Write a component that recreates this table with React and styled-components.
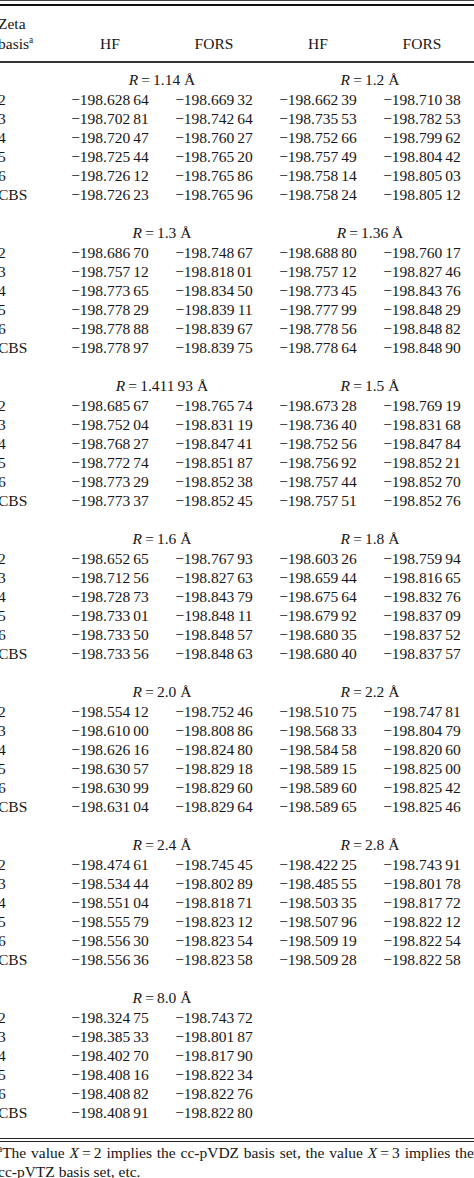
import React from 'react';
import styled, { createGlobalStyle } from 'styled-components';

const Global = createGlobalStyle`
  html, body { margin: 0; padding: 0; background: #fff; }
  body {
    overflow: hidden;
    font-family: "Liberation Serif", "Times New Roman", serif;
    color: #161616;
  }
`;

const COLS = '60px repeat(4, 104px)';
const ROW = 19.125;

const Page = styled.div`
  width: 476px;
  margin-left: -2px;
  font-size: 15.5px;
`;

const TopRule = styled.div`
  height: 3px;
  border-top: 1px solid #444;
  border-bottom: 2px solid #111;
`;

const HeaderGrid = styled.div`
  display: grid;
  grid-template-columns: ${COLS};
  align-items: end;
  padding: 8px 0 7px;
  line-height: 20px;
`;

const HeadLabel = styled.div`
  text-align: left;
`;

const HeadCell = styled.div`
  text-align: center;
`;

const Sup = styled.sup`
  font-size: 0.6em;
  line-height: 0;
  vertical-align: 0.6em;
`;

const HeaderRule = styled.div`
  border-top: 2px solid #333;
`;

const Body = styled.div`
  display: flex;
  flex-direction: column;
  gap: ${ROW}px;
  padding-top: 7.4px;
`;

const Block = styled.div`
  display: flex;
  flex-direction: column;
`;

const Row = styled.div`
  display: grid;
  grid-template-columns: ${COLS};
  height: ${ROW}px;
  line-height: ${ROW}px;
`;

const RangeCell = styled.div`
  grid-column: span 2;
  text-align: center;
  white-space: nowrap;
`;

const Italic = styled.i`
  font-style: italic;
`;

const LabelCell = styled.div`
  text-align: left;
`;

const ValueCell = styled.div`
  text-align: center;
  white-space: nowrap;
`;

const BottomRule = styled.div`
  margin-top: 15.7px;
  height: 2px;
  border-top: 1px solid #222;
  border-bottom: 1px solid #222;
`;

const Footnote = styled.p`
  margin: 0;
  padding-top: 1px;
  line-height: 19px;
  text-align: justify;
  text-align-last: left;
`;

const fmt = (v) => {
  const [a, b] = v.split('.');
  return `\u2212${a}.${b.slice(0, 3)}\u2009${b.slice(3)}`;
};

const LABELS = ['2', '3', '4', '5', '6', 'CBS'];

const BLOCKS = [
  {
    r: ['1.14', '1.2'],
    rows: [
      ['198.62864', '198.66932', '198.66239', '198.71038'],
      ['198.70281', '198.74264', '198.73553', '198.78253'],
      ['198.72047', '198.76027', '198.75266', '198.79962'],
      ['198.72544', '198.76520', '198.75749', '198.80442'],
      ['198.72612', '198.76586', '198.75814', '198.80503'],
      ['198.72623', '198.76596', '198.75824', '198.80512'],
    ],
  },
  {
    r: ['1.3', '1.36'],
    rows: [
      ['198.68670', '198.74867', '198.68880', '198.76017'],
      ['198.75712', '198.81801', '198.75712', '198.82746'],
      ['198.77365', '198.83450', '198.77345', '198.84376'],
      ['198.77829', '198.83911', '198.77799', '198.84829'],
      ['198.77888', '198.83967', '198.77856', '198.84882'],
      ['198.77897', '198.83975', '198.77864', '198.84890'],
    ],
  },
  {
    r: ['1.411\u200993', '1.5'],
    rows: [
      ['198.68567', '198.76574', '198.67328', '198.76919'],
      ['198.75204', '198.83119', '198.73640', '198.83168'],
      ['198.76827', '198.84741', '198.75256', '198.84784'],
      ['198.77274', '198.85187', '198.75692', '198.85221'],
      ['198.77329', '198.85238', '198.75744', '198.85270'],
      ['198.77337', '198.85245', '198.75751', '198.85276'],
    ],
  },
  {
    r: ['1.6', '1.8'],
    rows: [
      ['198.65265', '198.76793', '198.60326', '198.75994'],
      ['198.71256', '198.82763', '198.65944', '198.81665'],
      ['198.72873', '198.84379', '198.67564', '198.83276'],
      ['198.73301', '198.84811', '198.67992', '198.83709'],
      ['198.73350', '198.84857', '198.68035', '198.83752'],
      ['198.73356', '198.84863', '198.68040', '198.83757'],
    ],
  },
  {
    r: ['2.0', '2.2'],
    rows: [
      ['198.55412', '198.75246', '198.51075', '198.74781'],
      ['198.61000', '198.80886', '198.56833', '198.80479'],
      ['198.62616', '198.82480', '198.58458', '198.82060'],
      ['198.63057', '198.82918', '198.58915', '198.82500'],
      ['198.63099', '198.82960', '198.58960', '198.82542'],
      ['198.63104', '198.82964', '198.58965', '198.82546'],
    ],
  },
  {
    r: ['2.4', '2.8'],
    rows: [
      ['198.47461', '198.74545', '198.42225', '198.74391'],
      ['198.53444', '198.80289', '198.48555', '198.80178'],
      ['198.55104', '198.81871', '198.50335', '198.81772'],
      ['198.55579', '198.82312', '198.50796', '198.82212'],
      ['198.55630', '198.82354', '198.50919', '198.82254'],
      ['198.55636', '198.82358', '198.50928', '198.82258'],
    ],
  },
  {
    r: ['8.0'],
    rows: [
      ['198.32475', '198.74372'],
      ['198.38533', '198.80187'],
      ['198.40270', '198.81790'],
      ['198.40816', '198.82234'],
      ['198.40882', '198.82276'],
      ['198.40891', '198.82280'],
    ],
  },
];

const Range = ({ value }) => (
  <RangeCell>
    <Italic>R</Italic>
    {'\u2009=\u2009'}
    {value}
    {'\u00a0\u00c5'}
  </RangeCell>
);

export default function App() {
  return (
    <>
      <Global />
      <Page>
        <TopRule />
        <HeaderGrid>
          <HeadLabel>
            Zeta
            <br />
            basis<Sup>a</Sup>
          </HeadLabel>
          <HeadCell>HF</HeadCell>
          <HeadCell>FORS</HeadCell>
          <HeadCell>HF</HeadCell>
          <HeadCell>FORS</HeadCell>
        </HeaderGrid>
        <HeaderRule />
        <Body>
          {BLOCKS.map((b, bi) => (
            <Block key={bi}>
              <Row>
                <LabelCell />
                {b.r.map((r, ri) => (
                  <Range key={ri} value={r} />
                ))}
              </Row>
              {b.rows.map((row, i) => (
                <Row key={i}>
                  <LabelCell>{LABELS[i]}</LabelCell>
                  {row.map((v, j) => (
                    <ValueCell key={j}>{fmt(v)}</ValueCell>
                  ))}
                </Row>
              ))}
            </Block>
          ))}
        </Body>
        <BottomRule />
        <Footnote>
          <Sup>a</Sup>The value <Italic>X</Italic>{'\u2009=\u2009'}2 implies the cc-pVDZ basis set, the
          value <Italic>X</Italic>{'\u2009=\u2009'}3 implies the cc-pVTZ basis set, etc.
        </Footnote>
      </Page>
    </>
  );
}
